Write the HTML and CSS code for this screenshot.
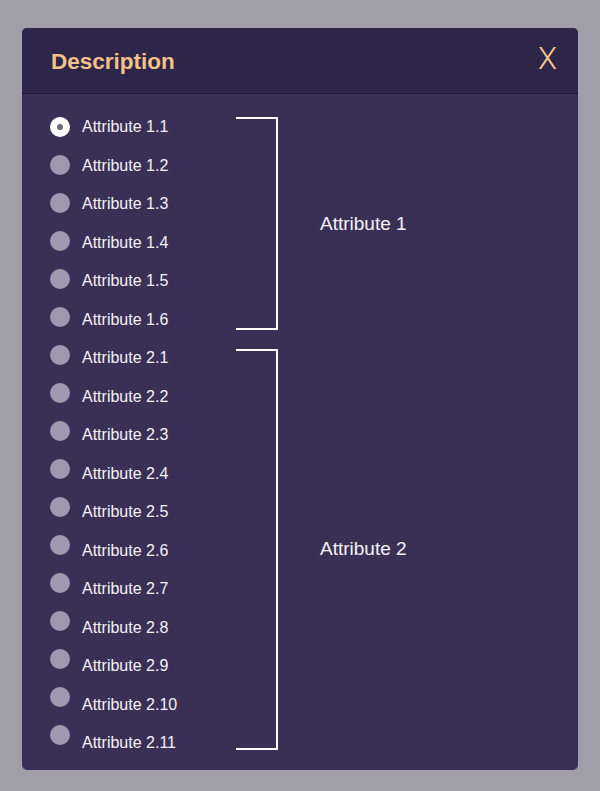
FILE: index.html
```html
<!DOCTYPE html>
<html lang="en">
<head>
    <meta charset="UTF-8">
    <meta name="viewport" content="width=device-width, initial-scale=1.0">
    <title>Description</title>
    <link rel="stylesheet" href="styles.css">
</head>
<body>
    <div class="panel">
        <header class="panel-header">
            <h1>Description</h1>
            <span class="close">X</span>
        </header>

        <div class="panel-body">
            <div class="radios">
                <span class="radio checked"></span>
                <span class="radio"></span>
                <span class="radio"></span>
                <span class="radio"></span>
                <span class="radio"></span>
                <span class="radio"></span>
                <span class="radio"></span>
                <span class="radio"></span>
                <span class="radio"></span>
                <span class="radio"></span>
                <span class="radio"></span>
                <span class="radio"></span>
                <span class="radio"></span>
                <span class="radio"></span>
                <span class="radio"></span>
                <span class="radio"></span>
                <span class="radio"></span>
            </div>

            <ul class="labels">
                <li>Attribute 1.1</li>
                <li>Attribute 1.2</li>
                <li>Attribute 1.3</li>
                <li>Attribute 1.4</li>
                <li>Attribute 1.5</li>
                <li>Attribute 1.6</li>
                <li>Attribute 2.1</li>
                <li>Attribute 2.2</li>
                <li>Attribute 2.3</li>
                <li>Attribute 2.4</li>
                <li>Attribute 2.5</li>
                <li>Attribute 2.6</li>
                <li>Attribute 2.7</li>
                <li>Attribute 2.8</li>
                <li>Attribute 2.9</li>
                <li>Attribute 2.10</li>
                <li>Attribute 2.11</li>
            </ul>

            <div class="groups">
                <div class="group group-1">
                    <div class="bracket"></div>
                    <span class="group-name">Attribute 1</span>
                </div>
                <div class="group group-2">
                    <div class="bracket"></div>
                    <span class="group-name">Attribute 2</span>
                </div>
            </div>
        </div>
    </div>
</body>
</html>
```

FILE: styles.css
```css
html, body {
    height: 100%;
}

body {
    margin: 0;
    padding: 28px 22px 21px;
    box-sizing: border-box;
    background: #a09ea8;
    font-family: "Liberation Sans", Arial, sans-serif;
    color: #f4f2f8;
}

.panel {
    background: #3a3055;
    border-radius: 5px;
    overflow: hidden;
    height: 742px;
}

.panel-header {
    display: flex;
    align-items: center;
    justify-content: space-between;
    height: 65px;
    padding: 0 21px 0 29px;
    background: #2d2649;
    border-bottom: 1px solid #1c1730;
}

.panel-header h1 {
    margin: 2px 0 0;
    font-size: 22.5px;
    font-weight: bold;
    color: #f3c28a;
}

.close {
    font-family: Roboto, "Liberation Sans", sans-serif;
    font-weight: 300;
    font-size: 31px;
    line-height: 1;
    margin-top: -4px;
    color: #fdca8f;
    cursor: pointer;
}

.panel-body {
    display: flex;
    padding: 13px 0 0 28px;
}

.radios {
    display: flex;
    flex-direction: column;
    gap: 18.2px;
    padding-top: 10px;
    width: 20px;
}

.radio {
    width: 19.8px;
    height: 19.8px;
    border-radius: 50%;
    background: #9f98ae;
    display: flex;
    align-items: center;
    justify-content: center;
}

.radio.checked {
    background: #fff;
}

.radio.checked::after {
    content: "";
    width: 6px;
    height: 6px;
    border-radius: 50%;
    background: #6d6a75;
}

.labels {
    list-style: none;
    margin: 1px 0 0 12px;
    padding: 0;
    width: 154px;
}

.labels li {
    font-size: 16px;
    line-height: 38.5px;
}

.groups {
    display: flex;
    flex-direction: column;
    gap: 18.5px;
    padding-top: 10px;
}

.group {
    display: flex;
    align-items: center;
}

.group-1 { height: 213px; }
.group-2 { height: 401px; }

.bracket {
    align-self: stretch;
    width: 40px;
    border: 2px solid #fff;
    border-left: none;
}

.group-name {
    margin-left: 42px;
    font-size: 19px;
}
```
